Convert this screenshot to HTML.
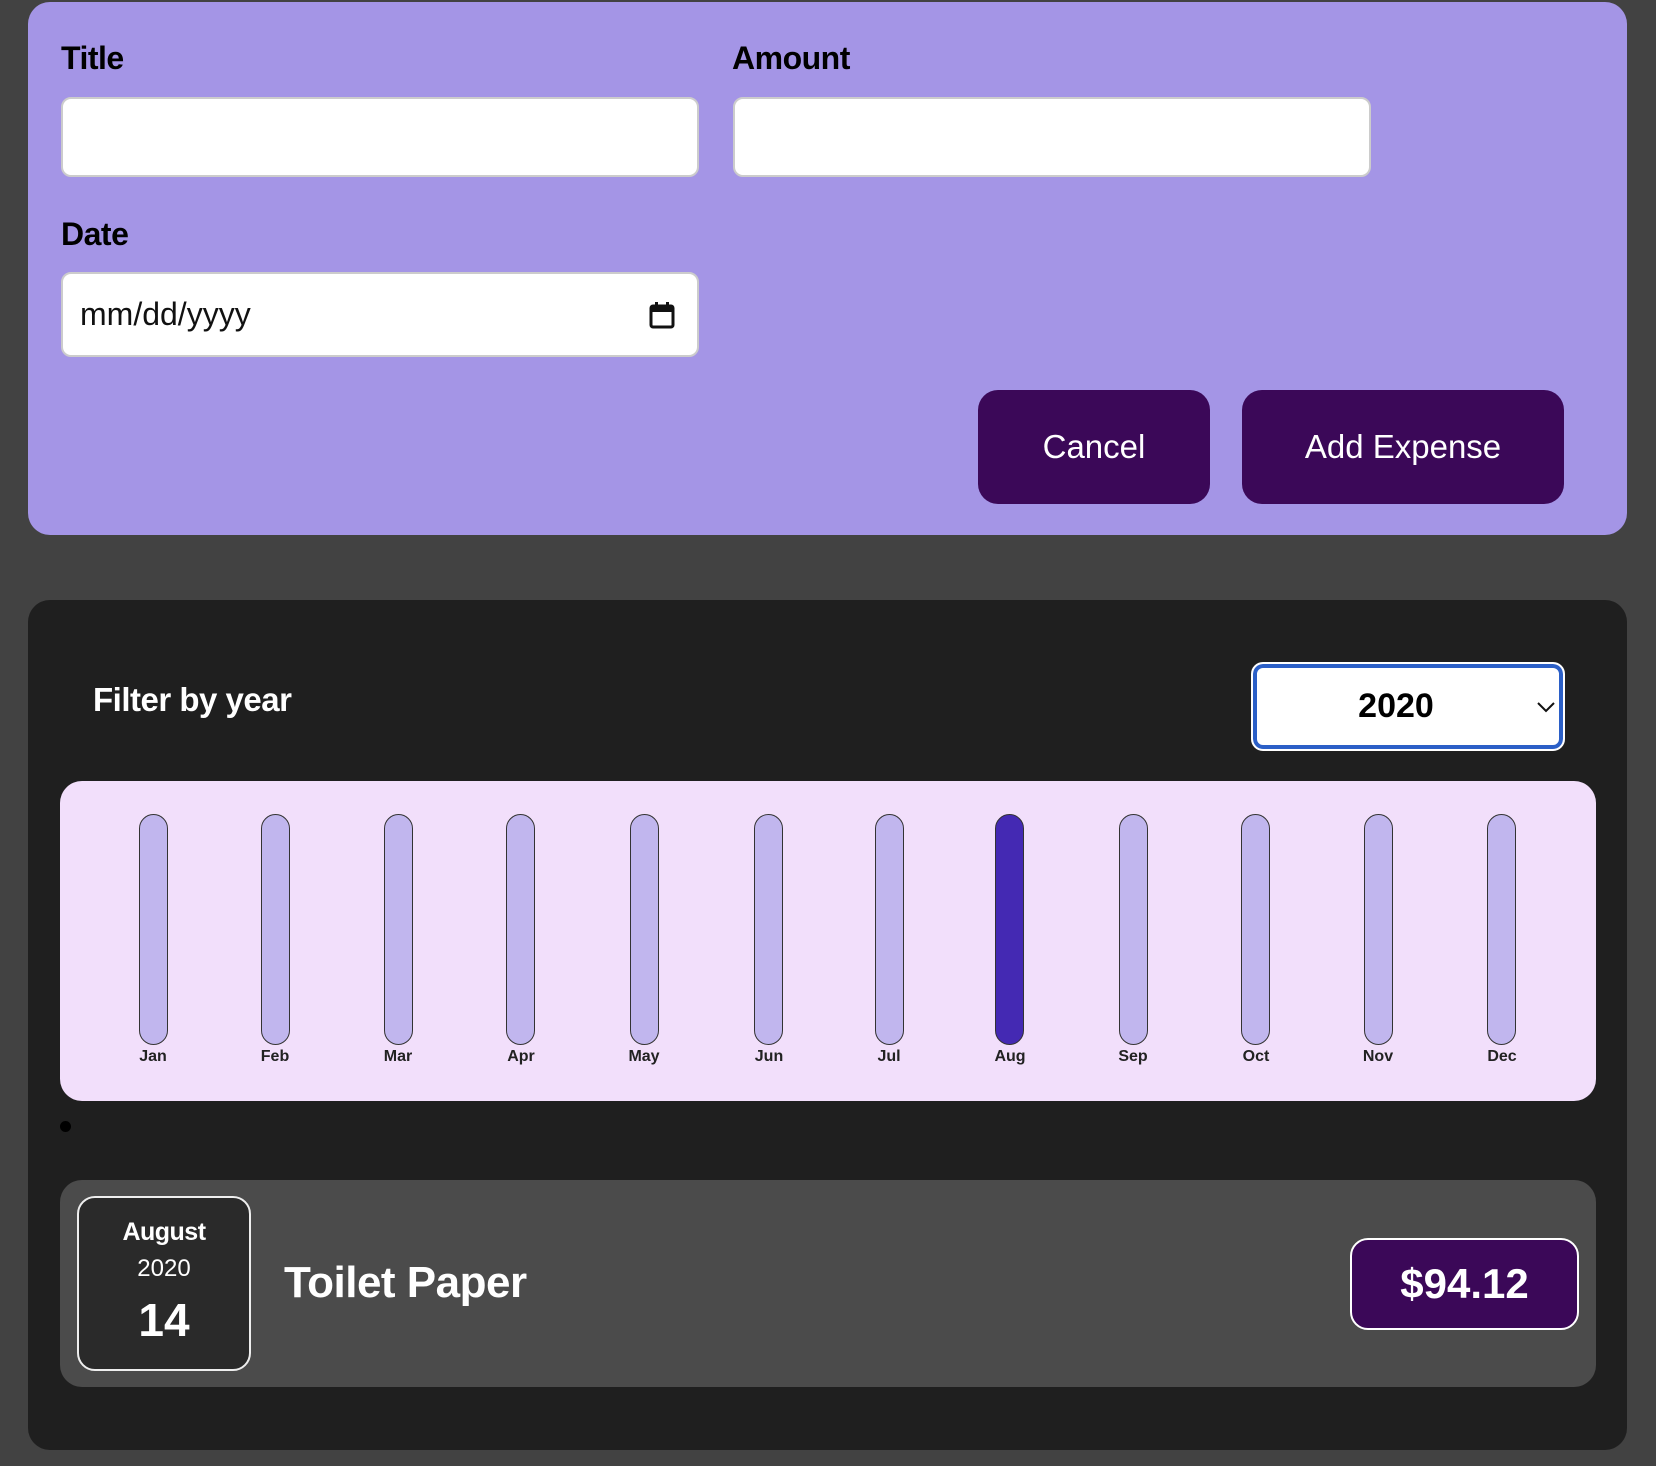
<!DOCTYPE html>
<html><head><meta charset="utf-8"><style>
*{box-sizing:border-box;margin:0;padding:0}
body{width:1656px;height:1466px;background:#424242;position:relative;overflow:hidden;font-family:"Liberation Sans",sans-serif}
.a{position:absolute}
.lbl{font-weight:bold;font-size:32px;color:#000;letter-spacing:-0.5px}
.inp{background:#fff;border:2px solid #ccc;border-radius:10px}
.btn{background:#3b0858;color:#fff;border-radius:20px;font-size:33px;display:flex;align-items:center;justify-content:center}
.bar{position:absolute;top:814px;width:29px;height:231px;border:1.5px solid #333;border-radius:15px;background:#c1b6ee}
.ml{position:absolute;top:1048px;width:60px;text-align:center;font-size:16px;font-weight:bold;color:#222}
</style></head><body>
<div class="a" style="left:28px;top:2px;width:1599px;height:533px;background:#a495e6;border-radius:22px"></div>
<div class="a lbl" style="left:61px;top:40px">Title</div>
<div class="a lbl" style="left:732px;top:40px">Amount</div>
<div class="a inp" style="left:61px;top:97px;width:638px;height:80px"></div>
<div class="a inp" style="left:733px;top:97px;width:638px;height:80px"></div>
<div class="a lbl" style="left:61px;top:216px">Date</div>
<div class="a inp" style="left:61px;top:272px;width:638px;height:85px"></div>
<div class="a" style="left:80px;top:296px;font-size:32px;color:#111">mm/dd/yyyy</div>
<svg class="a" style="left:648px;top:300px" width="28" height="30" viewBox="0 0 28 30"><rect x="3" y="6" width="22" height="21" rx="2" fill="none" stroke="#111" stroke-width="3"/><rect x="3" y="6" width="22" height="6" fill="#111"/><rect x="7" y="2" width="3" height="6" fill="#111"/><rect x="18" y="2" width="3" height="6" fill="#111"/></svg>
<div class="a btn" style="left:978px;top:390px;width:232px;height:114px">Cancel</div>
<div class="a btn" style="left:1242px;top:390px;width:322px;height:114px">Add Expense</div>

<div class="a" style="left:28px;top:600px;width:1599px;height:850px;background:#1f1f1f;border-radius:22px"></div>
<div class="a" style="left:93px;top:681px;font-size:33px;font-weight:bold;color:#fff;letter-spacing:-0.5px">Filter by year</div>
<div class="a" style="left:1251px;top:662px;width:314px;height:89px;background:#fff;border-radius:12px;border:2px solid #fff;box-shadow:inset 0 0 0 4px #2b5fc7"></div>
<div class="a" style="left:1251px;top:687px;width:290px;text-align:center;font-size:34px;font-weight:bold;color:#000">2020</div>
<svg class="a" style="left:1536px;top:700px" width="20" height="14" viewBox="0 0 20 14"><path d="M2 3l8 8 8-8" fill="none" stroke="#111" stroke-width="2"/></svg>

<div class="a" style="left:60px;top:781px;width:1536px;height:320px;background:#f2dffb;border-radius:22px"></div>
<div class="bar" style="left:139px"></div><div class="ml" style="left:123px">Jan</div>
<div class="bar" style="left:261px"></div><div class="ml" style="left:245px">Feb</div>
<div class="bar" style="left:384px"></div><div class="ml" style="left:368px">Mar</div>
<div class="bar" style="left:506px"></div><div class="ml" style="left:491px">Apr</div>
<div class="bar" style="left:630px"></div><div class="ml" style="left:614px">May</div>
<div class="bar" style="left:754px"></div><div class="ml" style="left:739px">Jun</div>
<div class="bar" style="left:875px"></div><div class="ml" style="left:859px">Jul</div>
<div class="bar" style="left:995px;background:#4429b3"></div><div class="ml" style="left:980px">Aug</div>
<div class="bar" style="left:1119px"></div><div class="ml" style="left:1103px">Sep</div>
<div class="bar" style="left:1241px"></div><div class="ml" style="left:1226px">Oct</div>
<div class="bar" style="left:1364px"></div><div class="ml" style="left:1348px">Nov</div>
<div class="bar" style="left:1487px"></div><div class="ml" style="left:1472px">Dec</div>
<div class="a" style="left:60px;top:1121px;width:11px;height:11px;border-radius:50%;background:#000"></div>

<div class="a" style="left:60px;top:1180px;width:1536px;height:207px;background:#4b4b4b;border-radius:22px"></div>
<div class="a" style="left:77px;top:1196px;width:174px;height:175px;background:#2a2a2a;border:2px solid #eee;border-radius:18px;color:#fff;text-align:center">
<div style="position:absolute;top:20px;width:100%;font-size:25px;font-weight:bold;letter-spacing:-0.5px">August</div>
<div style="position:absolute;top:57px;width:100%;font-size:24px">2020</div>
<div style="position:absolute;top:95px;width:100%;font-size:46px;font-weight:bold">14</div>
</div>
<div class="a" style="left:284px;top:1258px;font-size:44px;font-weight:bold;color:#fff;letter-spacing:-0.5px">Toilet Paper</div>
<div class="a" style="left:1350px;top:1238px;width:229px;height:92px;background:#3b0858;border:2px solid #fff;border-radius:18px;color:#fff;font-size:42px;font-weight:bold;display:flex;align-items:center;justify-content:center">$94.12</div>
</body></html>
